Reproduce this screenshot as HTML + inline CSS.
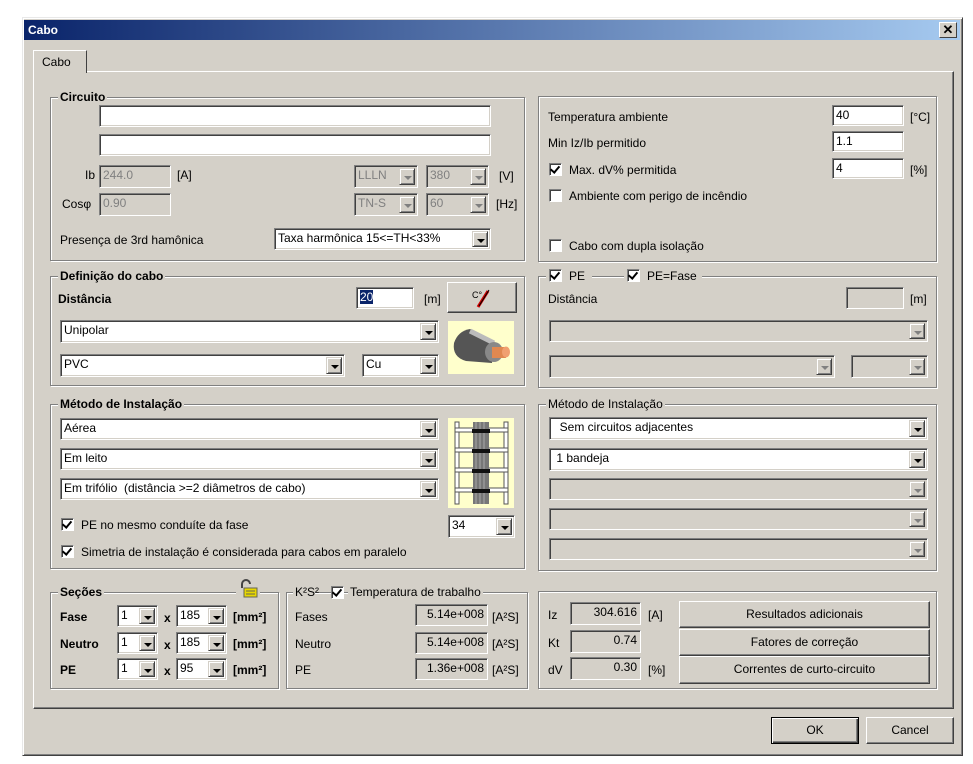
<!DOCTYPE html>
<html><head><meta charset="utf-8"><style>
*{box-sizing:border-box;margin:0;padding:0}
body{width:973px;height:764px;background:#fff;font-family:"Liberation Sans",sans-serif;font-size:12px;color:#000;position:relative;overflow:hidden}
div,span{position:absolute}
.dlg{left:22px;top:17px;width:941px;height:739px;background:#d4d0c8;border:1px solid;border-color:#e8e8e8 #404040 #404040 #e8e8e8;box-shadow:inset 1px 1px #fff,inset -1px -1px #808080}
.tb{left:24px;top:20px;width:936px;height:20px;background:linear-gradient(90deg,#0a246a,#a6caf0);color:#fff;font-weight:bold;font-size:12px;padding:3px 4px}
.x{left:939px;top:22px;width:18px;height:16px;background:#d4d0c8;border:1px solid;border-color:#fff #404040 #404040 #fff;font-weight:bold;font-size:13px;text-align:center;line-height:13px;color:#000}
.panel{left:33px;top:71px;width:921px;height:638px;border:1px solid;border-color:#fff #404040 #404040 #fff;box-shadow:inset -1px -1px #808080}
.tab{left:33px;top:50px;width:54px;height:23px;background:#d4d0c8;border:1px solid;border-color:#fff #404040 transparent #fff;border-bottom:none;padding:4px 0 0 8px}
.g{border:1px solid #808080;box-shadow:1px 1px 0 #fff,inset 1px 1px 0 #fff}
.lg{background:#d4d0c8;padding:0 2px;white-space:nowrap}
.b{font-weight:bold}
.t{white-space:nowrap}
.e{background:#fff;border:1px solid;border-color:#808080 #fff #fff #808080;box-shadow:inset 1px 1px #404040,inset -1px -1px #d4d0c8;padding:2px 3px;white-space:nowrap;overflow:hidden}
.d{background:#d4d0c8;color:#808080}
.r{text-align:right}
.dd{right:2px;top:2px;bottom:2px;width:16px;background:#d4d0c8;border:1px solid;border-color:#d4d0c8 #404040 #404040 #d4d0c8;box-shadow:inset 1px 1px #fff,inset -1px -1px #808080}
.dd:after{content:"";position:absolute;left:4px;top:7px;border-left:4px solid transparent;border-right:4px solid transparent;border-top:4px solid #000}
.dis .dd:after{border-top-color:#808080}
.btn{background:#d4d0c8;border:1px solid;border-color:#fff #404040 #404040 #fff;box-shadow:inset -1px -1px #808080;text-align:center;padding-top:5px}
.ck{width:13px;height:13px;background:#fff;border:1px solid;border-color:#808080 #fff #fff #808080;box-shadow:inset 1px 1px #404040}
.ck.on:after{content:"";position:absolute;left:2px;top:0px;width:4px;height:7px;border:solid #000;border-width:0 2px 2px 0;transform:rotate(40deg)}
</style></head><body>
<div class="dlg"></div>
<div class="tb">Cabo</div>
<div class="x">✕</div>
<div class="panel"></div>
<div class="tab">Cabo</div>

<!-- Circuito -->
<div class="g" style="left:50px;top:97px;width:475px;height:164px"></div>
<span class="lg b" style="left:58px;top:90px">Circuito</span>
<div class="e" style="left:99px;top:105px;width:392px;height:22px"></div>
<div class="e" style="left:99px;top:134px;width:392px;height:22px"></div>
<span class="t" style="left:85px;top:168px">Ib</span>
<div class="e d" style="left:99px;top:165px;width:72px;height:23px">244.0</div>
<span class="t" style="left:177px;top:168px">[A]</span>
<span class="t" style="left:62px;top:197px">Cosφ</span>
<div class="e d" style="left:99px;top:193px;width:72px;height:23px">0.90</div>
<div class="e d dis" style="left:354px;top:165px;width:64px;height:23px">LLLN<div class="dd"></div></div>
<div class="e d dis" style="left:426px;top:165px;width:63px;height:23px">380<div class="dd"></div></div>
<span class="t" style="left:499px;top:169px">[V]</span>
<div class="e d dis" style="left:354px;top:193px;width:64px;height:23px">TN-S<div class="dd"></div></div>
<div class="e d dis" style="left:426px;top:193px;width:63px;height:23px">60<div class="dd"></div></div>
<span class="t" style="left:496px;top:197px">[Hz]</span>
<span class="t" style="left:60px;top:233px">Presença de 3rd hamônica</span>
<div class="e" style="left:274px;top:228px;width:217px;height:22px">Taxa harmônica 15&lt;=TH&lt;33%<div class="dd"></div></div>

<!-- Definição -->
<div class="g" style="left:50px;top:276px;width:475px;height:110px"></div>
<span class="lg b" style="left:58px;top:269px">Definição do cabo</span>
<span class="t b" style="left:58px;top:292px">Distância</span>
<div class="e" style="left:356px;top:287px;width:58px;height:22px"><span style="position:static;background:#0a246a;color:#fff">20</span></div>
<span class="t" style="left:424px;top:292px">[m]</span>
<div class="btn" style="left:447px;top:282px;width:70px;height:31px"><svg width="24" height="22" viewBox="0 0 24 22"><text x="2" y="10" font-size="9" font-family="Liberation Sans">C°</text><path d="M18 3 L8 19" stroke="#c00" stroke-width="3"/><path d="M19 2 L9 18" stroke="#000" stroke-width="1"/></svg></div>
<div class="e" style="left:60px;top:320px;width:379px;height:23px">Unipolar<div class="dd"></div></div>
<div style="left:447px;top:320px;width:68px;height:55px;background:#ffffcc;border:1px solid #d4d0c8"><svg width="66" height="53"><path d="M6 22 Q10 10 22 8 L46 20 L44 42 L18 40 Q4 36 6 22Z" fill="#555"/><path d="M22 10 L46 22" stroke="#bbb" stroke-width="5"/><ellipse cx="46" cy="31" rx="9" ry="10" fill="#888"/><rect x="44" y="26" width="14" height="11" fill="#e08850"/><ellipse cx="58" cy="31" rx="4" ry="5.5" fill="#f0a070"/></svg></div>
<div class="e" style="left:60px;top:354px;width:285px;height:23px">PVC<div class="dd"></div></div>
<div class="e" style="left:362px;top:354px;width:77px;height:23px">Cu<div class="dd"></div></div>

<!-- Método -->
<div class="g" style="left:50px;top:404px;width:475px;height:165px"></div>
<span class="lg b" style="left:58px;top:397px">Método de Instalação</span>
<div class="e" style="left:60px;top:418px;width:379px;height:22px">Aérea<div class="dd"></div></div>
<div class="e" style="left:60px;top:448px;width:379px;height:22px">Em leito<div class="dd"></div></div>
<div class="e" style="left:60px;top:478px;width:379px;height:22px">Em trifólio &nbsp;(distância &gt;=2 diâmetros de cabo)<div class="dd"></div></div>
<div style="left:447px;top:417px;width:68px;height:92px;background:#ffffcc;border:1px solid #d4d0c8"><svg width="66" height="90"><g stroke="#555" fill="#fff"><rect x="7" y="4" width="4" height="82"/><rect x="56" y="4" width="4" height="82"/><rect x="7" y="10" width="53" height="4"/><rect x="7" y="30" width="53" height="4"/><rect x="7" y="50" width="53" height="4"/><rect x="7" y="70" width="53" height="4"/></g><rect x="25" y="4" width="16" height="82" fill="#777"/><path d="M28 4V86M32 4V86M36 4V86" stroke="#aaa"/><g fill="#111"><rect x="24" y="11" width="18" height="4"/><rect x="24" y="31" width="18" height="4"/><rect x="24" y="51" width="18" height="4"/><rect x="24" y="71" width="18" height="4"/></g></svg></div>
<div class="ck on" style="left:61px;top:518px"></div><span class="t" style="left:81px;top:518px">PE no mesmo conduíte da fase</span>
<div class="e" style="left:448px;top:515px;width:67px;height:23px">34<div class="dd"></div></div>
<div class="ck on" style="left:61px;top:545px"></div><span class="t" style="left:81px;top:545px">Simetria de instalação é considerada para cabos em paralelo</span>

<!-- Seções -->
<div class="g" style="left:50px;top:592px;width:229px;height:97px"></div>
<span class="lg b" style="left:58px;top:585px">Seções</span>
<div style="left:236px;top:578px;width:24px;height:21px;background:#d4d0c8"><svg width="24" height="21"><path d="M6 10V6a4 4 0 0 1 8 0" stroke="#444" stroke-width="2" fill="none"/><rect x="8" y="10" width="13" height="9" fill="#e8d800" stroke="#665"/><path d="M10 13h9M10 16h9" stroke="#665"/></svg></div>
<span class="t b" style="left:60px;top:610px">Fase</span>
<span class="t b" style="left:60px;top:637px">Neutro</span>
<span class="t b" style="left:60px;top:663px">PE</span>
<div class="e" style="left:117px;top:605px;width:41px;height:22px">1<div class="dd"></div></div>
<div class="e" style="left:117px;top:632px;width:41px;height:22px">1<div class="dd"></div></div>
<div class="e" style="left:117px;top:658px;width:41px;height:22px">1<div class="dd"></div></div>
<span class="t b" style="left:164px;top:611px">x</span><span class="t b" style="left:164px;top:638px">x</span><span class="t b" style="left:164px;top:664px">x</span>
<div class="e" style="left:176px;top:605px;width:51px;height:22px">185<div class="dd"></div></div>
<div class="e" style="left:176px;top:632px;width:51px;height:22px">185<div class="dd"></div></div>
<div class="e" style="left:176px;top:658px;width:51px;height:22px">95<div class="dd"></div></div>
<span class="t b" style="left:233px;top:610px">[mm²]</span><span class="t b" style="left:233px;top:637px">[mm²]</span><span class="t b" style="left:233px;top:663px">[mm²]</span>

<!-- K2S2 -->
<div class="g" style="left:286px;top:592px;width:242px;height:97px"></div>
<span class="lg" style="left:293px;top:585px;width:22px">K²S²</span>
<div class="ck on" style="left:331px;top:586px"></div>
<span class="lg" style="left:348px;top:585px">Temperatura de trabalho</span>
<span class="t" style="left:295px;top:610px">Fases</span>
<span class="t" style="left:295px;top:637px">Neutro</span>
<span class="t" style="left:295px;top:663px">PE</span>
<div class="e d r" style="left:415px;top:604px;width:73px;height:22px;color:#000">5.14e+008</div>
<div class="e d r" style="left:415px;top:632px;width:73px;height:22px;color:#000">5.14e+008</div>
<div class="e d r" style="left:415px;top:658px;width:73px;height:22px;color:#000">1.36e+008</div>
<span class="t" style="left:492px;top:610px">[A²S]</span><span class="t" style="left:492px;top:637px">[A²S]</span><span class="t" style="left:492px;top:663px">[A²S]</span>

<!-- Right top -->
<div class="g" style="left:538px;top:96px;width:399px;height:166px"></div>
<span class="t" style="left:548px;top:110px">Temperatura ambiente</span>
<div class="e" style="left:832px;top:105px;width:72px;height:21px">40</div>
<span class="t" style="left:910px;top:110px">[°C]</span>
<span class="t" style="left:548px;top:136px">Min Iz/Ib permitido</span>
<div class="e" style="left:832px;top:131px;width:72px;height:21px">1.1</div>
<div class="ck on" style="left:549px;top:163px"></div><span class="t" style="left:569px;top:163px">Max. dV% permitida</span>
<div class="e" style="left:832px;top:158px;width:72px;height:21px">4</div>
<span class="t" style="left:910px;top:163px">[%]</span>
<div class="ck" style="left:549px;top:189px"></div><span class="t" style="left:569px;top:189px">Ambiente com perigo de incêndio</span>
<div class="ck" style="left:549px;top:239px"></div><span class="t" style="left:569px;top:239px">Cabo com dupla isolação</span>

<!-- PE -->
<div class="g" style="left:538px;top:276px;width:399px;height:112px"></div>
<div class="lg" style="left:546px;top:268px;width:46px;height:16px"></div>
<div class="ck on" style="left:549px;top:269px"></div><span class="t" style="left:569px;top:269px">PE</span>
<div class="lg" style="left:624px;top:268px;width:78px;height:16px"></div>
<div class="ck on" style="left:627px;top:269px"></div><span class="t" style="left:647px;top:269px">PE=Fase</span>
<span class="t" style="left:548px;top:292px">Distância</span>
<div class="e d" style="left:846px;top:287px;width:58px;height:22px"></div>
<span class="t" style="left:910px;top:292px">[m]</span>
<div class="e d dis" style="left:549px;top:320px;width:379px;height:22px"><div class="dd"></div></div>
<div class="e d dis" style="left:549px;top:355px;width:286px;height:23px"><div class="dd"></div></div>
<div class="e d dis" style="left:851px;top:355px;width:77px;height:23px"><div class="dd"></div></div>

<!-- Método right -->
<div class="g" style="left:538px;top:404px;width:399px;height:167px"></div>
<span class="lg" style="left:546px;top:397px">Método de Instalação</span>
<div class="e" style="left:549px;top:417px;width:379px;height:23px">&nbsp;&nbsp;Sem circuitos adjacentes<div class="dd"></div></div>
<div class="e" style="left:549px;top:448px;width:379px;height:23px">&nbsp;1 bandeja<div class="dd"></div></div>
<div class="e d dis" style="left:549px;top:478px;width:379px;height:22px"><div class="dd"></div></div>
<div class="e d dis" style="left:549px;top:508px;width:379px;height:22px"><div class="dd"></div></div>
<div class="e d dis" style="left:549px;top:538px;width:379px;height:22px"><div class="dd"></div></div>

<!-- Results -->
<div class="g" style="left:538px;top:591px;width:399px;height:98px"></div>
<span class="t" style="left:548px;top:608px">Iz</span>
<div class="e d r" style="left:570px;top:602px;width:71px;height:23px;color:#000">304.616</div>
<span class="t" style="left:648px;top:608px">[A]</span>
<span class="t" style="left:548px;top:636px">Kt</span>
<div class="e d r" style="left:570px;top:630px;width:71px;height:23px;color:#000">0.74</div>
<span class="t" style="left:548px;top:663px">dV</span>
<div class="e d r" style="left:570px;top:657px;width:71px;height:23px;color:#000">0.30</div>
<span class="t" style="left:648px;top:663px">[%]</span>
<div class="btn" style="left:679px;top:601px;width:251px;height:27px">Resultados adicionais</div>
<div class="btn" style="left:679px;top:629px;width:251px;height:27px">Fatores de correção</div>
<div class="btn" style="left:679px;top:656px;width:251px;height:28px">Correntes de curto-circuito</div>

<div class="btn" style="left:771px;top:717px;width:88px;height:27px;border:1px solid #000;box-shadow:inset 1px 1px #fff,inset -1px -1px #404040,inset -2px -2px #808080">OK</div>
<div class="btn" style="left:866px;top:717px;width:88px;height:27px">Cancel</div>
</body></html>
